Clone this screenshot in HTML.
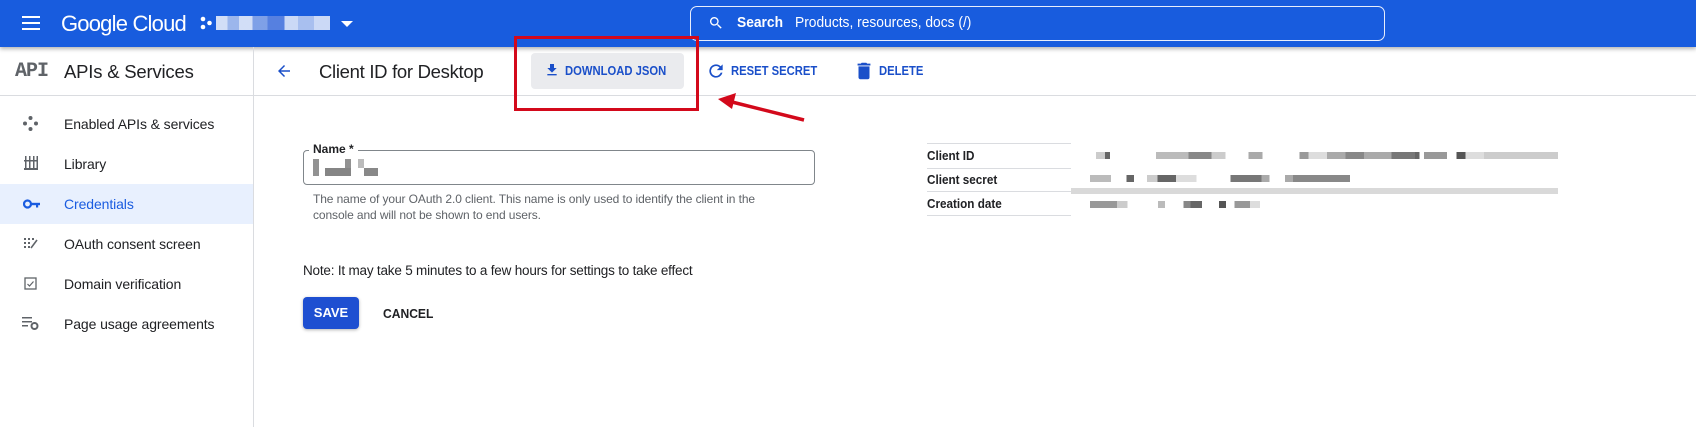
<!DOCTYPE html>
<html><head><meta charset="utf-8"><style>
*{box-sizing:border-box;margin:0;padding:0}
body{width:1696px;height:427px;overflow:hidden;background:#fff;font-family:"Liberation Sans",Arial,sans-serif;color:#202124;position:relative}
.a{position:absolute}
.hdr{left:0;top:0;width:1696px;height:47px;background:#185cde;box-shadow:0 2px 4px rgba(0,0,0,.3)}
.side{left:0;top:47px;width:254px;height:380px;border-right:1px solid #dadce0}
.item{position:absolute;left:0;width:253px;height:40px;font-size:14px;line-height:40px;padding-left:64px;color:#202124;letter-spacing:-.1px}
.btn{font-size:12.5px;font-weight:bold;color:#1a4fc9;transform:scaleX(.9);transform-origin:left}
.lbl{font-size:13px;color:#202124;font-weight:bold;transform:scaleX(.9);transform-origin:left}
.hl{position:absolute;left:927px;width:144px;height:1px;background:#dadce0}
</style></head><body>
<div class="a hdr"></div>
<div class="a" style="left:22px;top:16px;width:18px;height:2px;background:#fff;box-shadow:0 6px 0 #fff,0 12px 0 #fff"></div>
<div class="a" style="left:61px;top:11px;font-size:22px;color:#fff;letter-spacing:-.8px">Google Cloud</div>
<svg class="a" style="left:199px;top:16px" width="14" height="14" viewBox="0 0 14 14"><circle cx="4" cy="3" r="2.3" fill="#fff"/><circle cx="4" cy="11" r="2.3" fill="#fff"/><circle cx="10.5" cy="7" r="2.3" fill="#fff"/></svg>
<div class="a" style="left:216px;top:16px;width:114px;height:14px;background:linear-gradient(90deg,#e6ecfa 0 10%,#aac0ee 10% 20%,#e6ecfa 20% 32%,#8aa7e8 32% 45%,#5d84e0 45% 60%,#dfe7f9 60% 72%,#b8caf1 72% 86%,#dfe7f9 86%);opacity:.9"></div>
<div class="a" style="left:341px;top:21px;width:0;height:0;border-left:6px solid transparent;border-right:6px solid transparent;border-top:6px solid #fff"></div>
<div class="a" style="left:690px;top:6px;width:695px;height:35px;border:1px solid #e8eefc;border-radius:7px"></div>
<svg class="a" style="left:708px;top:15px" width="16" height="16" viewBox="0 0 24 24"><path fill="#fff" d="M15.5 14h-.8l-.3-.3A6.5 6.5 0 1 0 9.5 16a6.5 6.5 0 0 0 4.2-1.6l.3.3v.8l5 5 1.5-1.5-5-5zm-6 0a4.5 4.5 0 1 1 0-9 4.5 4.5 0 0 1 0 9z"/></svg>
<div class="a" style="left:737px;top:14px;font-size:15px;color:#fff;font-weight:bold;transform:scaleX(.92);transform-origin:left">Search</div>
<div class="a" style="left:795px;top:14px;font-size:15px;color:#fff;transform:scaleX(.92);transform-origin:left">Products, resources, docs (/)</div>

<div class="a" style="left:0;top:95px;width:1696px;height:1px;background:#dadce0"></div>
<div class="a" style="left:15px;top:60px;font-family:'Liberation Mono',monospace;font-weight:bold;font-size:20px;color:#5f6368;letter-spacing:-1px">API</div>
<div class="a" style="left:64px;top:61px;font-size:18.5px;letter-spacing:-.2px">APIs &amp; Services</div>
<div class="a side"></div>
<svg class="a" style="left:275px;top:62px" width="18" height="18" viewBox="0 0 24 24"><path fill="#1a4fc9" d="M20 11H7.8l5.6-5.6L12 4l-8 8 8 8 1.4-1.4L7.8 13H20z"/></svg>
<div class="a" style="left:319px;top:61px;font-size:18.5px;letter-spacing:-.3px">Client ID for Desktop</div>
<div class="a" style="left:531px;top:53px;width:153px;height:36px;background:#eaebee;border-radius:4px"></div>
<svg class="a" style="left:544px;top:62px" width="16" height="16" viewBox="0 0 24 24"><path fill="#1a4fc9" d="M19 9h-4V3H9v6H5l7 7 7-7zM5 18v2h14v-2z"/></svg>
<div class="a btn" style="left:565px;top:64px">DOWNLOAD JSON</div>
<div class="a" style="left:514px;top:36px;width:185px;height:75px;border:3px solid #d3091b"></div>
<svg class="a" style="left:700px;top:90px" width="120" height="40"><line x1="104" y1="30" x2="32" y2="12" stroke="#d3091b" stroke-width="3.5"/><path d="M18 9 L36 3 L32 19 Z" fill="#d3091b"/></svg>
<svg class="a" style="left:706px;top:61px" width="20" height="20" viewBox="0 0 24 24"><path fill="#1a4fc9" d="M17.65 6.35A7.96 7.96 0 0 0 12 4a8 8 0 1 0 7.73 10h-2.08A6 6 0 1 1 12 6c1.66 0 3.14.69 4.22 1.78L13 11h7V4l-2.35 2.35z"/></svg>
<div class="a btn" style="left:731px;top:64px">RESET SECRET</div>
<svg class="a" style="left:853px;top:59px" width="22" height="24" viewBox="0 0 24 24"><path fill="#1a4fc9" d="M6 19c0 1.1.9 2 2 2h8a2 2 0 0 0 2-2V7H6v12zM19 4h-3.5l-1-1h-5l-1 1H5v2h14V4z"/></svg>
<div class="a btn" style="left:879px;top:64px">DELETE</div>

<div class="item" style="top:104px">Enabled APIs &amp; services</div>
<div class="item" style="top:144px">Library</div>
<div class="item" style="top:184px;background:#e8f0fe;color:#1a5ce0">Credentials</div>
<div class="item" style="top:224px">OAuth consent screen</div>
<div class="item" style="top:264px">Domain verification</div>
<div class="item" style="top:304px">Page usage agreements</div>
<svg class="a" style="left:23px;top:116px" width="15" height="15" viewBox="0 0 15 15" fill="#5f6368"><circle cx="7.5" cy="2" r="2"/><circle cx="7.5" cy="13" r="2"/><circle cx="2" cy="7.5" r="2"/><circle cx="13" cy="7.5" r="2"/></svg>
<svg class="a" style="left:24px;top:156px" width="14" height="14" viewBox="0 0 14 14" fill="#5f6368"><rect x="0" y="12" width="14" height="2"/><rect x="0" y="4" width="14" height="1.5"/><rect x="1" y="0" width="1.5" height="12"/><rect x="5" y="0" width="1.5" height="12"/><rect x="9" y="0" width="1.5" height="12"/><rect x="12.5" y="0" width="1.5" height="12"/></svg>
<svg class="a" style="left:23px;top:199px" width="18" height="10" viewBox="0 0 18 10" fill="#1a5ce0"><circle cx="4.5" cy="5" r="3.5" fill="none" stroke="#1a5ce0" stroke-width="2.2"/><rect x="8" y="3.8" width="9" height="2.4"/><rect x="13" y="5" width="2.2" height="3.5"/></svg>
<svg class="a" style="left:24px;top:237px" width="14" height="13" viewBox="0 0 14 13" fill="#5f6368"><rect x="0" y="1" width="2" height="2"/><rect x="4" y="1" width="2" height="2"/><rect x="8" y="1" width="2" height="2"/><rect x="0" y="5" width="2" height="2"/><rect x="4" y="5" width="2" height="2"/><rect x="0" y="9" width="2" height="2"/><rect x="4" y="9" width="2" height="2"/><path d="M7 11 L13 3" stroke="#5f6368" stroke-width="1.6"/></svg>
<svg class="a" style="left:24px;top:277px" width="13" height="13" viewBox="0 0 13 13"><rect x="1" y="1" width="11" height="11" fill="none" stroke="#5f6368" stroke-width="1.3"/><path d="M3.5 7 L5.5 9 L9.5 4.5" fill="none" stroke="#5f6368" stroke-width="1.2"/></svg>
<svg class="a" style="left:22px;top:316px" width="17" height="14" viewBox="0 0 17 14" fill="#5f6368"><rect x="0" y="1" width="10" height="1.5"/><rect x="0" y="5" width="10" height="1.5"/><rect x="0" y="9" width="6" height="1.5"/><circle cx="12.5" cy="10" r="3" fill="none" stroke="#5f6368" stroke-width="2"/></svg>

<div class="a" style="left:303px;top:150px;width:512px;height:35px;border:1px solid #80868b;border-radius:4px"></div>
<div class="a" style="left:309px;top:142px;background:#fff;padding:0 4px;font-size:12px;font-weight:bold;color:#202124">Name *</div>
<div class="a" style="left:313px;top:159px;width:6px;height:17px;background:#777;opacity:.8"></div>
<div class="a" style="left:325px;top:168px;width:26px;height:8px;background:#666;opacity:.8"></div>
<div class="a" style="left:345px;top:159px;width:6px;height:9px;background:#777;opacity:.8"></div>
<div class="a" style="left:358px;top:159px;width:6px;height:9px;background:#bbb"></div>
<div class="a" style="left:364px;top:168px;width:14px;height:8px;background:#888"></div>
<div class="a" style="left:313px;top:191px;font-size:12px;line-height:16px;color:#5f6368;width:470px;letter-spacing:-.1px">The name of your OAuth 2.0 client. This name is only used to identify the client in the console and will not be shown to end users.</div>
<div class="a" style="left:303px;top:263px;font-size:13.5px;letter-spacing:-.2px">Note: It may take 5 minutes to a few hours for settings to take effect</div>
<div class="a" style="left:303px;top:297px;width:56px;height:32px;background:#1e4fd1;border-radius:4px;color:#fff;font-size:13px;font-weight:bold;text-align:center;line-height:32px;box-shadow:0 1px 3px rgba(0,0,0,.3)">SAVE</div>
<div class="a" style="left:383px;top:306px;font-size:13px;font-weight:bold;transform:scaleX(.93);transform-origin:left">CANCEL</div>

<div class="hl" style="top:143px"></div><div class="hl" style="top:168px"></div><div class="hl" style="top:191px"></div><div class="hl" style="top:215px"></div>
<div class="a lbl" style="left:927px;top:148px">Client ID</div>
<div class="a lbl" style="left:927px;top:172px">Client secret</div>
<div class="a lbl" style="left:927px;top:196px">Creation date</div>
<div class="a" style="left:1071px;top:188px;width:487px;height:6px;background:#d9d9d9"></div>
<div class="a" style="left:1096px;top:152px;width:462px;height:7px;background:linear-gradient(90deg,#ccc 0 2%,#666 2% 3%,transparent 3% 13%,#bbb 13% 20%,#888 20% 25%,#ccc 25% 28%,transparent 28% 33%,#aaa 33% 36%,transparent 36% 44%,#999 44% 46%,#ddd 46% 50%,#aaa 50% 54%,#888 54% 58%,#aaa 58% 64%,#777 64% 69%,#666 69% 70%,transparent 70% 71%,#999 71% 76%,transparent 76% 78%,#555 78% 80%,#ddd 80% 84%,#ccc 84% 88%)"></div>
<div class="a" style="left:1090px;top:175px;width:260px;height:7px;background:linear-gradient(90deg,#bbb 0 8%,transparent 8% 14%,#666 14% 17%,transparent 17% 22%,#ccc 22% 26%,#666 26% 33%,#ddd 33% 41%,transparent 41% 54%,#777 54% 66%,#aaa 66% 69%,transparent 69% 75%,#aaa 75% 78%,#888 78% 84%)"></div>
<div class="a" style="left:1090px;top:201px;width:170px;height:7px;background:linear-gradient(90deg,#999 0 16%,#ccc 16% 22%,transparent 22% 40%,#bbb 40% 44%,transparent 44% 55%,#888 55% 59%,#666 59% 66%,transparent 66% 76%,#555 76% 80%,transparent 80% 85%,#999 85% 94%,#ddd 94%)"></div>
</body></html>
